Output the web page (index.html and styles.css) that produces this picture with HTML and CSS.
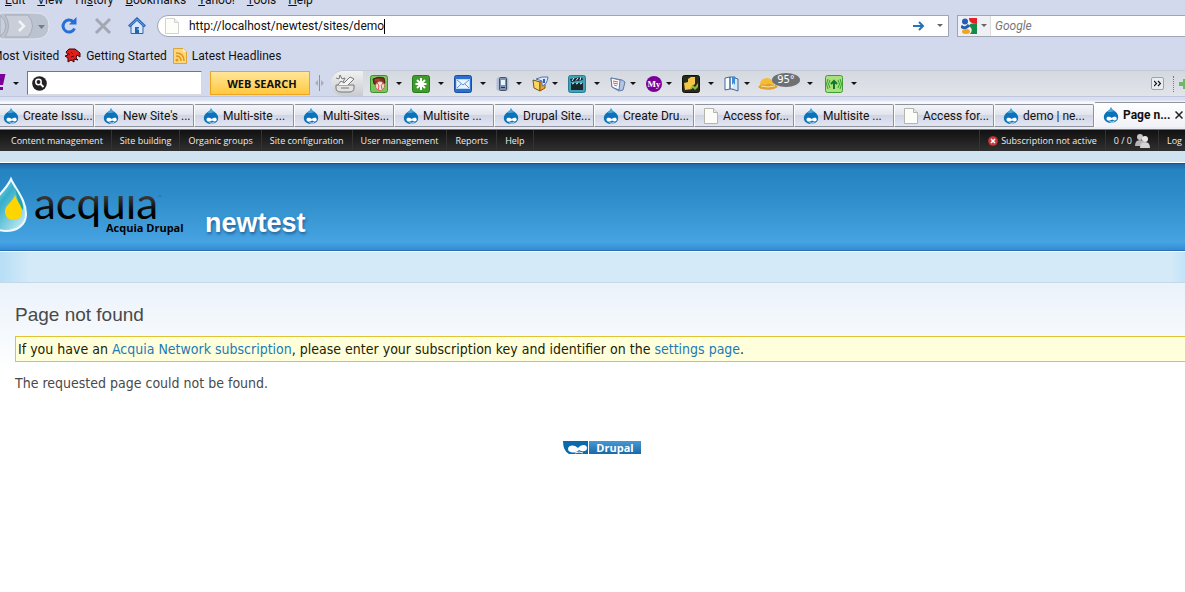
FILE: index.html
```html
<!DOCTYPE html>
<html lang="en">

<head>
    <meta charset="UTF-8">
    <meta name="viewport" content="width=device-width, initial-scale=1.0">
    <title>Page not found | newtest</title>
    <link rel="stylesheet" href="styles.css">
</head>

<body>
    <!-- Shared icons -->
    <svg class="sprite" aria-hidden="true">
        <symbol id="drupal" viewBox="0 0 16 16">
            <path d="M8 0C8.500 2.300 10 3 11.500 4C14 5.600 15.200 7.600 15.200 10C15.200 13.600 12 16 8 16S.8 13.600.8 10C.8 7.600 2.300 5.600 4.700 4C6.300 3 7.600 2.300 8 0Z" fill="#0b73b9" />
            <path d="M8 0C8.500 2.300 10 3 11.500 4C10 5 6 5 4 5C6 3.500 7.500 2.500 8 0Z" fill="#4aa3dc" />
            <path d="M3.500 11.700C3.500 9.500 6.500 9.300 8.800 11C10.300 9.800 13.500 9 13.700 11.500C13.800 13.800 11 13.800 9.200 12.500C7 14.200 3.500 14.100 3.500 11.700Z" fill="#fff" />
            <path d="M6.500 14.700C8 15.300 10 15.300 11.300 14.500" fill="none" stroke="#fff" />
        </symbol>
        <symbol id="page" viewBox="0 0 14 16">
            <path d="M.5.5H9.500L13.500 4.500V15.500H.5Z" fill="#fcfcf8" stroke="#b5b5ae" />
            <path d="M9.500.5V4.500H13.500" fill="#e8e8e2" stroke="#b5b5ae" />
        </symbol>
    </svg>

    <div class="browser">
        <nav class="menu">
            <a href="#"><u>E</u>dit</a>
            <a href="#"><u>V</u>iew</a>
            <a href="#">Hi<u>s</u>tory</a>
            <a href="#"><u>B</u>ookmarks</a>
            <a href="#"><u>Y</u>ahoo!</a>
            <a href="#"><u>T</u>ools</a>
            <a href="#"><u>H</u>elp</a>
        </nav>

        <div class="navbar">
            <button class="history-btn" aria-label="Forward">
                <svg width="50" height="28" viewBox="0 0 50 28">
                    <path d="M0 1H35Q49 1 49 14T35 27H0Z" fill="#bcc3d0" stroke="#e2e6f0" />
                    <path d="M0 3Q12 14 0 25ZM5 3H28Q37 14 28 25H5Q12 14 5 3Z" fill="#c9ced9" stroke="#a4abba" />
                    <path d="M19 9L24 14L19 19" fill="none" stroke="#f0f3f8" stroke-width="2.500" />
                    <path d="M38 13H45L41.500 17Z" fill="#747d8d" />
                </svg>
            </button>
            <button class="nav-btn" aria-label="Reload">
                <svg width="18" height="18" viewBox="0 0 18 18">
                    <path d="M13 4.500A6 6 0 1 0 14.500 11.500" fill="none" stroke="#246fd8" stroke-width="3" />
                    <path d="M9 7.500H16.500V0Z" fill="#246fd8" />
                </svg>
            </button>
            <button class="nav-btn" aria-label="Stop">
                <svg width="18" height="18" viewBox="0 0 18 18">
                    <path d="M2 2L16 16M16 2L2 16" stroke="#a3a7b1" stroke-width="3" />
                </svg>
            </button>
            <button class="nav-btn" aria-label="Home">
                <svg width="18" height="18" viewBox="0 0 18 18">
                    <path d="M3 8V16.500H15V8L9 3Z" fill="#d5e7f9" stroke="#2c64b5" />
                    <path d="M1 9.500L9 2L17 9.500" fill="none" stroke="#2c64b5" stroke-width="3" />
                    <path d="M1.500 9L9 2.300L16.500 9" fill="none" stroke="#6aa7ec" />
                    <path d="M7 10H11V16.500H7Z" fill="#2464b0" />
                    <path d="M9.500 12H11" stroke="#fff" />
                </svg>
            </button>
            <form class="url-bar">
                <svg class="url-page" width="14" height="16"><use href="#page" /></svg>
                <label class="url-field">
                    <input type="text" aria-label="Address" value="http://localhost/newtest/sites/demo">
                    <span class="url-caret"></span>
                </label>
                <button type="button" aria-label="Go">
                    <svg width="12" height="10" viewBox="0 0 12 10">
                        <path d="M0 5H10M6 1L10 5L6 9" fill="none" stroke="#2573b5" stroke-width="2" />
                    </svg>
                </button>
                <button type="button" class="caret grey" aria-label="Show history"></button>
            </form>
            <form class="search-bar">
                <button type="button" class="engine" aria-label="Search engine">
                    <svg width="16" height="16" viewBox="0 0 16 16">
                        <path d="M8 0H16V5H11Q8 4 8 0Z" fill="#e32227" />
                        <path d="M16 5V16H9Q13 11 8 8Q8 5 16 5Z" fill="#158b46" />
                        <circle cx="4" cy="3.500" r="3" fill="#245db5" />
                        <path d="M0 8Q4 12 8 7" fill="none" stroke="#245db5" stroke-width="3" />
                        <ellipse cx="5" cy="13.500" rx="4" ry="2.500" fill="#f0a51c" />
                    </svg>
                    <span class="caret grey"></span>
                </button>
                <input type="text" aria-label="Search" placeholder="Google">
            </form>
        </div>

        <nav class="bookmarks">
            <a href="#">Most Visited</a>
            <a href="#">
                <svg width="16" height="16" viewBox="0 0 16 16">
                    <path d="M1 4L4 1L10 1L15 5L15 9L12 7L11 10L13 12L9 11L9 14L6 12L3 14L3 10L0 8L3 7Z" fill="#e01f1b" stroke="#3b0505" />
                    <path d="M6 4L8 6M3 5L5 7M6 9L9 8" stroke="#4b0808" />
                </svg>
                Getting Started
            </a>
            <a href="#">
                <svg width="14" height="16" viewBox="0 0 14 16">
                    <path d="M.5.5H10L13.500 4V15.500H.5Z" fill="#fbd77d" stroke="#dba338" />
                    <path d="M10 .5V4H13.500Z" fill="#fff0c4" />
                    <circle cx="4" cy="12" r="1.500" fill="#e89416" />
                    <path d="M3 8Q8 8 8 13M3 5Q11 5 11 13" fill="none" stroke="#e89416" stroke-width="1.500" />
                </svg>
                Latest Headlines
            </a>
        </nav>

        <div class="toolbar">
            <button class="yahoo" aria-label="Yahoo!">
                <svg width="6" height="18" viewBox="0 0 6 18">
                    <path d="M0 0H5.500L3 11H0ZM0 13H3V16H0Z" fill="#7b0099" />
                </svg>
                <span class="caret"></span>
            </button>
            <label class="toolbar-search">
                <svg width="15" height="15" viewBox="0 0 15 15">
                    <circle cx="7.500" cy="7.500" r="7.300" fill="#222" />
                    <circle cx="6.500" cy="6" r="2.700" fill="none" stroke="#fff" stroke-width="1.500" />
                    <path d="M8.500 8L11.500 11" stroke="#fff" stroke-width="2" />
                </svg>
                <input type="text" aria-label="Web search">
            </label>
            <button class="web-search">WEB SEARCH</button>
            <svg class="splitter" width="9" height="16" viewBox="0 0 9 16">
                <path d="M4.500 0V16" stroke="#8c92a0" />
                <path d="M3 5V11L0 8ZM6 5V11L9 8Z" fill="#a7adba" />
            </svg>
            <div class="tools">
                <button class="edit-tools" aria-label="Customize">
                    <svg width="22" height="20" viewBox="0 0 22 20">
                        <path d="M2 11H20V14Q20 18 15 18H7Q2 18 2 14Z" fill="#e2e2e2" stroke="#777" />
                        <path d="M4 11L7 7L10 9L16 3L20 5L14 11M2 4L5 5L6 1L8 5L11 4L9 8M7 14H15" fill="#f5f5f5" stroke="#777" />
                    </svg>
                </button>
                <button class="tool" aria-label="Sports">
                    <svg width="18" height="18" viewBox="0 0 18 18">
                        <rect x=".5" y=".5" width="17" height="17" rx="2" fill="#77c65c" stroke="#3d9130" />
                        <path d="M3 4Q8 1 14 3L15 8Q9 11 4 9Z" fill="#7b3323" stroke="#4c1c12" />
                        <circle cx="10" cy="11" r="4.500" fill="#f4e3dc" stroke="#c96b5b" />
                        <path d="M7 8Q10 10 8 15M13 8Q10 10 12 14M5 5H10" fill="none" stroke="#d94c40" />
                    </svg>
                    <span class="caret"></span>
                </button>
                <button class="tool" aria-label="Shortcuts">
                    <svg width="18" height="18" viewBox="0 0 18 18">
                        <rect x=".5" y=".5" width="17" height="17" rx="2" fill="#3f9b2d" stroke="#267a1c" />
                        <path d="M9 3V15M3.500 9H14.500M5 5L13 13M13 5L5 13" stroke="#fff" stroke-width="2" />
                    </svg>
                    <span class="caret"></span>
                </button>
                <button class="tool" aria-label="Mail">
                    <svg width="18" height="18" viewBox="0 0 18 18">
                        <rect x=".5" y=".5" width="17" height="17" rx="2" fill="#2d6fce" stroke="#1b4e9e" />
                        <rect x="2.500" y="4.500" width="13" height="9" fill="#eaf4ff" stroke="#bcd8f4" />
                        <path d="M3 5L9 10L15 5M3 13L7 9M15 13L11 9" fill="none" stroke="#5b93d6" />
                    </svg>
                    <span class="caret"></span>
                </button>
                <button class="tool small" aria-label="Mobile">
                    <svg width="13" height="16" viewBox="0 0 13 16">
                        <rect x=".5" y="1.500" width="12" height="13" rx="2" fill="#aebdd4" stroke="#c5cfe0" />
                        <rect x="3.500" y="1.500" width="7" height="13" rx="1" fill="#7f91ad" stroke="#40536f" />
                        <path d="M5 4H9V9H5Z" fill="#e5f5ff" />
                        <path d="M5 11.500H9" stroke="#26364e" />
                    </svg>
                    <span class="caret"></span>
                </button>
                <button class="tool small" aria-label="Answers">
                    <svg width="17" height="16" viewBox="0 0 17 16">
                        <path d="M1 4L8 6V15L2 12Z" fill="#ffd65c" stroke="#6a5728" />
                        <path d="M8 6L13 4V12L8 15Z" fill="#f1a323" stroke="#80581b" />
                        <path d="M4 3L10 1L16 1Q15 9 10 10V5Z" fill="#d9e5fa" stroke="#5874ae" />
                        <path d="M12 3V7" stroke="#375da6" stroke-width="2" />
                    </svg>
                    <span class="caret"></span>
                </button>
                <button class="tool" aria-label="Movies">
                    <svg width="18" height="18" viewBox="0 0 18 18">
                        <rect x=".5" y=".5" width="17" height="17" rx="2" fill="#43a0b5" stroke="#2a7d94" />
                        <path d="M3 8H15V15H3ZM2 4L14 2L15 5L3 7Z" fill="#17282e" />
                        <path d="M4 6L6 3M8 5.500L10 3M12 5L13 2M4 9L6 8M8 9L10 8M12 9L14 8" stroke="#e8f7fa" />
                    </svg>
                    <span class="caret"></span>
                </button>
                <button class="tool small" aria-label="News">
                    <svg width="16" height="16" viewBox="0 0 16 16">
                        <path d="M1 2L12 4L15 6L13 14L9 15L2 11Z" fill="#b2c5e7" stroke="#6079a8" />
                        <path d="M1 2L10 4L9 14L2 11Z" fill="#fff" stroke="#6079a8" />
                        <path d="M3 5L8 6M3 7L8 8" stroke="#e45748" />
                        <path d="M4 9L7 10" stroke="#5f85c8" />
                    </svg>
                    <span class="caret"></span>
                </button>
                <button class="tool small" aria-label="My Yahoo!">
                    <svg width="16" height="16" viewBox="0 0 16 16">
                        <circle cx="8" cy="8" r="8" fill="#7b0099" />
                        <text class="my-text" x="8" y="11" text-anchor="middle">My</text>
                    </svg>
                    <span class="caret"></span>
                </button>
                <button class="tool" aria-label="Finance">
                    <svg width="18" height="18" viewBox="0 0 18 18">
                        <rect x=".5" y=".5" width="17" height="17" rx="2" fill="#292a1e" stroke="#11120c" />
                        <path d="M2 8L6 7V4L9 2H13V9L10 11V14L3 15Z" fill="#f3c645" />
                        <path d="M7 15L11 10L13 12L16 8V12L13 15L11 13Z" fill="#8fb83d" />
                    </svg>
                    <span class="caret"></span>
                </button>
                <button class="tool small" aria-label="Bookmarks">
                    <svg width="15" height="16" viewBox="0 0 15 16">
                        <path d="M1 2L6 1V13L1 14ZM6 1H11V13H6Z" fill="#f8fcff" stroke="#43699d" />
                        <path d="M11 2L14 3V15L8 13" fill="#d9e6f5" stroke="#43699d" />
                        <path d="M8 1H11V9L9.500 7L8 9Z" fill="#3a8ce0" />
                    </svg>
                    <span class="caret"></span>
                </button>
                <button class="tool weather" aria-label="Weather 95°">
                    <svg width="44" height="24" viewBox="0 0 44 24">
                        <ellipse cx="9" cy="12" rx="7" ry="6" fill="#f5bd35" />
                        <path d="M0 15Q3 11 7 13Q11 10 14 13Q18 12 20 15Q14 19 8 17Q3 18 0 15Z" fill="#dfa037" />
                        <path d="M3 14Q10 16 17 14" fill="none" stroke="#fce39a" />
                        <ellipse cx="28" cy="8" rx="14" ry="7" fill="#6e7073" />
                        <text class="temperature" x="28" y="11" text-anchor="middle">95°</text>
                    </svg>
                    <span class="caret"></span>
                </button>
                <button class="tool" aria-label="Upload">
                    <svg width="18" height="18" viewBox="0 0 18 18">
                        <rect x=".5" y=".5" width="17" height="17" rx="2" fill="#a7e17d" stroke="#429c31" />
                        <path d="M9 14V6M6 9L9 6L12 9" fill="none" stroke="#16742c" stroke-width="2" />
                        <path d="M5 5Q2 9 5 13M13 5Q16 9 13 13M3 4Q0 9 3 14M15 4Q18 9 15 14" fill="none" stroke="#399d35" />
                    </svg>
                    <span class="caret"></span>
                </button>
                <button class="more" aria-label="More">
                    <svg width="7" height="7" viewBox="0 0 7 7">
                        <path d="M0 1L2.500 3.500L0 6M4 1L6.500 3.500L4 6" fill="none" stroke="#111" stroke-width="1.200" />
                    </svg>
                </button>
                <button class="add" aria-label="Add">
                    <svg width="6" height="12" viewBox="0 0 6 12">
                        <path d="M4 1H6V11H4V8H0V4H4Z" fill="#6eb866" />
                    </svg>
                </button>
            </div>
        </div>

        <nav class="tabs">
            <a class="tab" href="#"><svg width="16" height="16"><use href="#drupal" /></svg>Create Issu...</a>
            <a class="tab" href="#"><svg width="16" height="16"><use href="#drupal" /></svg>New Site's ...</a>
            <a class="tab" href="#"><svg width="16" height="16"><use href="#drupal" /></svg>Multi-site ...</a>
            <a class="tab" href="#"><svg width="16" height="16"><use href="#drupal" /></svg>Multi-Sites...</a>
            <a class="tab" href="#"><svg width="16" height="16"><use href="#drupal" /></svg>Multisite ...</a>
            <a class="tab" href="#"><svg width="16" height="16"><use href="#drupal" /></svg>Drupal Site...</a>
            <a class="tab" href="#"><svg width="16" height="16"><use href="#drupal" /></svg>Create Dru...</a>
            <a class="tab" href="#"><svg width="16" height="16"><use href="#page" /></svg>Access for...</a>
            <a class="tab" href="#"><svg width="16" height="16"><use href="#drupal" /></svg>Multisite ...</a>
            <a class="tab" href="#"><svg width="16" height="16"><use href="#page" /></svg>Access for...</a>
            <a class="tab" href="#"><svg width="16" height="16"><use href="#drupal" /></svg>demo | ne...</a>
            <a class="tab active" href="#"><svg width="16" height="16"><use href="#drupal" /></svg>Page n...
                <svg class="close" width="8" height="8" viewBox="0 0 8 8">
                    <path d="M.5.5L7.500 7.500M7.500.5L.5 7.500" stroke="#222" stroke-width="1.500" />
                </svg>
            </a>
        </nav>
    </div>

    <nav class="admin-menu">
        <a href="#">Content management</a>
        <a href="#">Site building</a>
        <a href="#">Organic groups</a>
        <a href="#">Site configuration</a>
        <a href="#">User management</a>
        <a href="#">Reports</a>
        <a href="#">Help</a>
        <a class="subscription" href="#">
            <svg width="10" height="10" viewBox="0 0 10 10">
                <circle cx="5" cy="5" r="4.800" fill="#c8383c" />
                <path d="M3 3L7 7M7 3L3 7" stroke="#fff" stroke-width="1.500" />
            </svg>
            Subscription not active
        </a>
        <a class="users" href="#">0 / 0
            <svg width="15" height="14" viewBox="0 0 15 14">
                <circle cx="5" cy="3" r="3" fill="#c8c8c8" />
                <path d="M0 12Q0 6 5 6T9 12Z" fill="#b5b5b5" />
                <circle cx="10" cy="5" r="3" fill="#e8e8e8" />
                <path d="M5 14Q5 8 10 8T15 14Z" fill="#d5d5d5" />
            </svg>
        </a>
        <a class="logout" href="#">Log</a>
    </nav>

    <div class="top-strip"></div>

    <header class="header">
        <svg class="logo" width="190" height="86" viewBox="0 0 190 86" role="img" aria-label="acquia Acquia Drupal">
            <defs>
                <linearGradient id="drop" x1="0" y1="0" x2="1" y2="1">
                    <stop offset="0" stop-color="#e9fbff" />
                    <stop offset=".4" stop-color="#35aeca" />
                    <stop offset="1" stop-color="#d8f3fa" />
                </linearGradient>
                <linearGradient id="letters" x1="0" y1="0" x2="0" y2="1">
                    <stop offset=".3" stop-color="#4c4c4c" />
                    <stop offset=".7" stop-color="#000" />
                </linearGradient>
            </defs>
            <path d="M11 15C16 26 26 36 26 50C26 61 17 67 6 67C-5 67-12 60-12 50C-12 38 5 29 11 15Z" fill="url(#drop)" stroke="#eefaff" stroke-width="2" />
            <path d="M15 24C19 31 24 39 23 46L19 42Z" fill="#20a4ae" />
            <path d="M15 31C17 38 22 41 22 48C22 53 18 56 13 56S5 52 5 47C5 41 13 38 15 31Z" fill="#ffd500" />
            <text class="logo-name" x="34" y="55" fill="url(#letters)">acquıa</text>
            <text class="logo-tm" x="158" y="35">™</text>
            <text class="logo-product" x="106" y="68">Acquia Drupal</text>
        </svg>
        <a class="site-name" href="#">newtest</a>
    </header>

    <div class="sub-header"></div>

    <main class="content">
        <h1>Page not found</h1>
        <div class="message">If you have an <a href="#">Acquia Network subscription</a>, please enter your subscription key and identifier on the <a href="#">settings page</a>.</div>
        <p>The requested page could not be found.</p>
    </main>

    <footer class="footer">
        <a class="badge" href="#">
            <svg width="25" height="13" viewBox="0 0 25 13">
                <path d="M0 0H25V13H6Q0 10 0 0Z" fill="#0a6aad" />
                <path d="M5 8C5 4 11 3 15 7C18 3 24 3 24 7C24 11 19 11 16 9C12 13 5 12 5 8Z" fill="#fff" />
                <path d="M12 12Q16 10 20 12" fill="none" stroke="#fff" />
            </svg>
            <span>Drupal</span>
        </a>
    </footer>
</body>

</html>
```
FILE: styles.css
```css
* {
    box-sizing: border-box;
}

body {
    margin: 0;
    overflow-x: hidden;
    background-color: #fff;
    color: #494949;
    font-family: 'DejaVu Sans Condensed', 'Open Sans', Verdana, sans-serif;
    font-size: 14px;
}

a {
    color: #1b7ab5;
    text-decoration: none;
}

button {
    display: flex;
    align-items: center;
    flex-shrink: 0;
    padding: 0;
    border: none;
    background: none;
}

input {
    min-width: 0;
    padding: 0;
    border: none;
    outline: none;
    background: none;
    color: #111;
    font: inherit;
}

svg {
    display: block;
    flex-shrink: 0;
}

.sprite {
    position: absolute;
    width: 0;
    height: 0;
}

/* Browser window */
.browser {
    overflow: hidden;
    background-color: #d3d9ed;
    color: #111;
    font-family: Roboto, 'Segoe UI', sans-serif;
    font-size: 12px;
}

.browser a {
    color: #111;
}

.menu {
    display: flex;
    align-items: flex-end;
    gap: 12px;
    height: 9px;
    padding-left: 5px;
    line-height: 18px;
}

.navbar {
    display: flex;
    align-items: center;
    height: 33px;
}

.nav-btn {
    margin-left: 16px;
}

.history-btn {
    margin-right: -6px;
}

.url-bar {
    display: flex;
    align-items: center;
    flex: 1;
    height: 22px;
    margin: 0 8px 0 11px;
    padding: 0 5px 0 7px;
    border: 1px solid #a0a5b3;
    border-radius: 11px 0 0 11px;
    background-color: #fff;
}

.url-page {
    margin-right: 10px;
    opacity: 0.6;
}

.url-field {
    position: relative;
    display: flex;
    flex: 1;
}

.url-field input {
    flex: 1;
}

.url-caret {
    position: absolute;
    top: 0;
    left: 195px;
    width: 1px;
    height: 15px;
    background-color: #000;
}

.url-bar .caret {
    margin-left: 12px;
}

.caret {
    width: 0;
    height: 0;
    border: solid transparent;
    border-width: 3px 3px 0;
    border-top-color: #111;
}

.caret.grey {
    border-top-color: #666;
}

.search-bar {
    display: flex;
    align-items: center;
    width: 228px;
    height: 22px;
    border: 1px solid #a0a5b3;
    border-right: none;
    background-color: #fff;
}

.search-bar input {
    flex: 1;
    padding-left: 4px;
}

.search-bar input::placeholder {
    color: #777;
    font-style: italic;
    opacity: 1;
}

.engine {
    gap: 4px;
    height: 20px;
    padding: 0 3px 0 3px;
    border-right: 1px solid #ddd;
    background-color: #eef0f4;
}

.bookmarks {
    display: flex;
    align-items: center;
    gap: 6px;
    height: 28px;
    margin-left: -8px;
}

.bookmarks a {
    display: flex;
    align-items: center;
    gap: 5px;
}

.toolbar {
    display: flex;
    align-items: center;
    height: 27px;
    border-bottom: 1px solid #c0c7dc;
}

.yahoo {
    gap: 7px;
    width: 27px;
}

.toolbar-search {
    display: flex;
    align-items: center;
    width: 175px;
    height: 24px;
    padding-left: 4px;
    border: 1px solid #d5d8df;
    border-top-color: #777;
    border-left-color: #777;
    background-color: #fff;
}

.toolbar-search input {
    flex: 1;
}

.web-search {
    justify-content: center;
    width: 100px;
    height: 24px;
    margin: 0 5px 0 8px;
    padding-left: 4px;
    border: 1px solid #eda51f;
    background-image: linear-gradient(#ffe69a, #ffc940);
    color: #111;
    font-family: 'Open Sans', 'Segoe UI', sans-serif;
    font-size: 11px;
    font-weight: bold;
}

.tools {
    display: flex;
    align-items: center;
    flex: 1;
    height: 26px;
    margin-left: 7px;
    border-top: 1px solid #c5cad8;
    border-radius: 12px 0 0 12px;
    background-image: linear-gradient(#d4d9e0, #e1e4e9);
}

.edit-tools {
    width: 32px;
    height: 25px;
    margin-right: 7px;
    padding-left: 3px;
    border-radius: 12px 0 0 12px;
    background-image: linear-gradient(#f1f1f1, #c8cbd0);
}

.tool {
    justify-content: space-between;
    width: 42px;
    padding-right: 10px;
}

.tool.small {
    width: 36px;
}

.tool.weather {
    width: 65px;
    margin-left: -2px;
    margin-right: 2px;
}

.my-text {
    fill: #fff;
    font: bold 9px 'Liberation Serif', serif;
}

.temperature {
    fill: #fff;
    font: 10px 'DejaVu Sans', sans-serif;
}

.more {
    justify-content: center;
    width: 13px;
    height: 13px;
    margin-left: auto;
    border: 1px solid #9aa3b2;
    border-radius: 2px;
    background-color: #e8edf2;
}

.add {
    height: 16px;
    margin-left: 9px;
    padding-left: 5px;
    border-left: 1px dotted #777;
}

.tabs {
    display: flex;
    align-items: flex-end;
    height: 33px;
    margin-left: -6px;
    padding-bottom: 2px;
    border-bottom: 1px solid #777;
    background-image: linear-gradient(#d9dff0 3px, #f8f9fc 5px, #f8f9fc 7px, #e8ebf4);
}

.tab {
    display: flex;
    align-items: center;
    flex: 0 0 100px;
    gap: 4px;
    min-width: 0;
    height: 23px;
    padding-left: 8px;
    border: 1px solid #8e929d;
    border-left-color: #fff;
    border-radius: 2px 2px 0 0;
    background-image: linear-gradient(#f4f5f9, #e0e3ec 50%, #d0d5e6 50%, #e3e6f1);
    white-space: nowrap;
}

.tab.active {
    height: 25px;
    border-bottom: none;
    background-image: linear-gradient(#fff, #f0f2f7);
    font-weight: bold;
}

/* Drupal admin menu */
.admin-menu {
    display: flex;
    align-items: center;
    height: 21px;
    padding-left: 3px;
    overflow: hidden;
    background-image: linear-gradient(#111, #303030);
    font-family: 'Open Sans', Tahoma, sans-serif;
    font-size: 9px;
    line-height: 21px;
    white-space: nowrap;
}

.admin-menu a {
    display: flex;
    align-items: center;
    padding: 0 8px;
    border-right: 1px solid #333;
    color: #eee;
}

.admin-menu .subscription {
    gap: 3px;
    margin-left: auto;
    border-left: 1px solid #333;
}

.admin-menu .users {
    gap: 3px;
}

.admin-menu .logout {
    width: 26px;
    border-right: none;
}

/* Site */
.top-strip {
    height: 12px;
    border-bottom: 1px solid #fff;
    background-color: #cfe3f1;
}

.header {
    display: flex;
    align-items: flex-start;
    height: 88px;
    border-top: 1px solid #18548c;
    border-bottom: 1px solid #2c70b0;
    background-image: linear-gradient(#2267a8, #2583c2 6px, #2c8bc8 35%, #47a3e1 78px, #318bda);
}

.logo-name {
    font: 44px Lato, sans-serif;
}

.logo-tm {
    fill: #28648f;
    font: 5px Lato, sans-serif;
}

.logo-product {
    fill: #000;
    font: bold 11px 'Open Sans', sans-serif;
}

.site-name {
    padding: 43px 0 0 15px;
    color: #fff;
    font: bold 27px/32px 'Liberation Sans', Arial, sans-serif;
    text-shadow: 1px 2px 3px #20609a;
}

.sub-header {
    height: 32px;
    border-top: 1px solid #f6fbff;
    border-bottom: 1px solid #c5d9e8;
    background-image: linear-gradient(90deg, #b6def5, #d4eaf8 30px, #d4eaf8 calc(100% - 14px), #c2e3f8);
}

.content {
    padding: 20px 0 0 15px;
    background-image: linear-gradient(#eaf2fa, #fff 90px);
}

.content h1 {
    margin: 0 0 10px;
    font: 19px/23px 'Liberation Sans', Arial, sans-serif;
}

.message {
    padding: 4px 2px;
    border: 1px solid #e0c437;
    border-right: none;
    background-color: #ffffdc;
    color: #220;
    line-height: 16px;
}

.content p {
    margin: 13px 0 0;
    line-height: 16px;
}

.footer {
    display: flex;
    justify-content: center;
    padding: 50px 0 20px 19px;
}

.badge {
    display: flex;
    gap: 1px;
}

.badge span {
    width: 52px;
    background-image: linear-gradient(#4799d2, #1869aa);
    color: #fff;
    font: bold 11px/13px 'Open Sans', sans-serif;
    text-align: center;
}
```
